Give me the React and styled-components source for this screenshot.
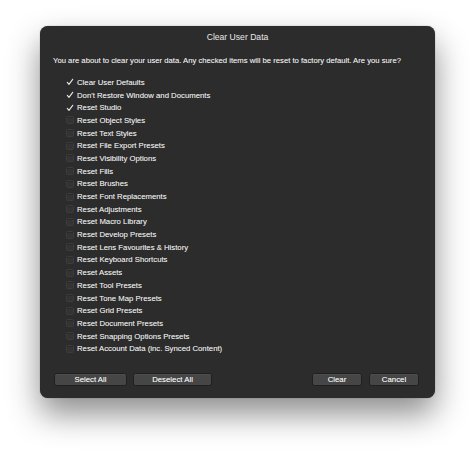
import React, { useState } from "react";
import styled, { createGlobalStyle } from "styled-components";

const GlobalStyle = createGlobalStyle`
  html, body {
    margin: 0;
    background: #ffffff;
  }
  body {
    font-family: "Liberation Sans", Arial, sans-serif;
    -webkit-font-smoothing: antialiased;
  }
`;

const Page = styled.div`
  width: 474px;
  height: 450px;
  padding: 26px 0 0 40px;
  box-sizing: border-box;
`;

const Dialog = styled.div`
  width: 395px;
  height: 372px;
  box-sizing: border-box;
  background: #2c2c2c;
  border-radius: 8px;
  box-shadow: 0 16px 32px rgba(0, 0, 0, 0.45), 0 0 1px rgba(0, 0, 0, 0.6);
  color: #e4e4e4;
  display: flex;
  flex-direction: column;
  padding: 5px 16px 12px 13px;
`;

const Title = styled.div`
  text-align: center;
  font-size: 8.6px;
  line-height: 12px;
  color: #e8e8e8;
  margin-left: 3px;
`;

const Message = styled.p`
  margin: 12px 0 0 0;
  font-size: 7.7px;
  line-height: 11px;
  white-space: nowrap;
  text-shadow: 0 0 0.3px rgba(255, 255, 255, 0.5);
`;

const List = styled.div`
  margin: 10px 0 0 13px;
  display: flex;
  flex-direction: column;
`;

const Row = styled.label`
  display: flex;
  align-items: center;
  height: 12.7px;
  font-size: 7.75px;
  gap: 3px;
  cursor: default;
  text-shadow: 0 0 0.3px rgba(255, 255, 255, 0.5);
`;

const Box = styled.span`
  width: 8px;
  height: 8px;
  box-sizing: border-box;
  border-radius: 1.5px;
  display: flex;
  align-items: center;
  justify-content: center;
  background: ${(p) => (p.checked ? "transparent" : "#333333")};
  border: ${(p) => (p.checked ? "none" : "0.5px solid #3c3c3c")};
  box-shadow: ${(p) => (p.checked ? "none" : "inset 0 0.5px 0 rgba(0,0,0,0.35)")};
`;

const Footer = styled.div`
  margin-top: auto;
  display: flex;
  align-items: center;
  gap: 6px;
`;

const Spacer = styled.div`
  flex: 1;
`;

const Button = styled.button`
  width: ${(p) => p.w}px;
  height: 13px;
  padding: 0;
  margin-left: ${(p) => p.ml || 0}px;
  border: 0.5px solid #1f1f1f;
  border-radius: 2.5px;
  background: #464646;
  box-shadow: inset 0 0.5px 0 rgba(255, 255, 255, 0.08);
  color: #ececec;
  font-family: "Liberation Sans", Arial, sans-serif;
  font-size: 7.8px;
  line-height: 12px;
  text-shadow: 0 0 0.3px rgba(255, 255, 255, 0.6);
`;

const Check = () => (
  <svg width="8" height="8" viewBox="0 0 8 8">
    <path
      d="M1.3 4.4 L3 6.3 L6.7 1.3"
      fill="none"
      stroke="#e8e8e8"
      strokeWidth="1.1"
      strokeLinecap="round"
      strokeLinejoin="round"
    />
  </svg>
);

const items = [
  "Clear User Defaults",
  "Don't Restore Window and Documents",
  "Reset Studio",
  "Reset Object Styles",
  "Reset Text Styles",
  "Reset File Export Presets",
  "Reset Visibility Options",
  "Reset Fills",
  "Reset Brushes",
  "Reset Font Replacements",
  "Reset Adjustments",
  "Reset Macro Library",
  "Reset Develop Presets",
  "Reset Lens Favourites & History",
  "Reset Keyboard Shortcuts",
  "Reset Assets",
  "Reset Tool Presets",
  "Reset Tone Map Presets",
  "Reset Grid Presets",
  "Reset Document Presets",
  "Reset Snapping Options Presets",
  "Reset Account Data (inc. Synced Content)",
];

export default function App() {
  const [checked, setChecked] = useState(items.map((_, i) => i < 3));

  const toggle = (i) =>
    setChecked((c) => c.map((v, j) => (j === i ? !v : v)));

  return (
    <Page>
      <GlobalStyle />
      <Dialog>
        <Title>Clear User Data</Title>
        <Message>
          You are about to clear your user data. Any checked items will be reset
          to factory default. Are you sure?
        </Message>
        <List>
          {items.map((label, i) => (
            <Row key={label} onClick={() => toggle(i)}>
              <Box checked={checked[i]}>{checked[i] && <Check />}</Box>
              {label}
            </Row>
          ))}
        </List>
        <Footer>
          <Button w={73} ml={1} onClick={() => setChecked(items.map(() => true))}>
            Select All
          </Button>
          <Button w={79} onClick={() => setChecked(items.map(() => false))}>
            Deselect All
          </Button>
          <Spacer />
          <Button w={50}>Clear</Button>
          <Button w={50} ml={1}>Cancel</Button>
        </Footer>
      </Dialog>
    </Page>
  );
}
